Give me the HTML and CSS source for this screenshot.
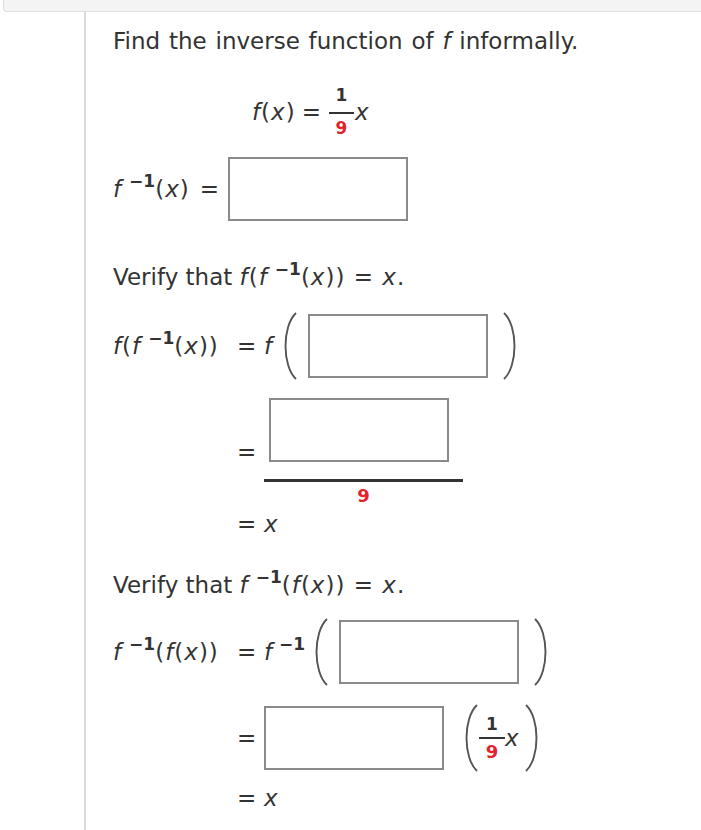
FILE: index.html
```html
<!DOCTYPE html>
<html>
<head>
<meta charset="utf-8">
<link rel="stylesheet" href="styles.css">
</head>
<body>
<div class="topbar"></div>
<div class="page">
  <p class="text intro">Find the inverse function of <i>f</i> informally.</p>

  <div class="given">
    <span class="m"><i>f</i>(<i>x</i>)</span>
    <span class="eq-inline">=</span>
    <span class="frac small">
      <span class="num">1</span>
      <span class="bar"></span>
      <span class="den red">9</span>
    </span><i class="m">x</i>
  </div>

  <div class="answer-row">
    <span class="m"><i>f</i><sup class="sup">−1</sup>(<i>x</i>)</span>
    <span class="eq-inline">=</span>
    <span class="box"></span>
  </div>

  <p class="text verify"><span class="words">Verify that</span> <span class="m"><i>f</i>(<i>f</i><sup class="sup">−1</sup>(<i>x</i>)) = <i>x</i>.</span></p>

  <div class="steps steps-one">
    <div class="step step-a">
      <span class="lbl m"><i>f</i>(<i>f</i><sup class="sup">−1</sup>(<i>x</i>))</span>
      <span class="eq">=</span>
      <span class="expr">
        <i class="m fn">f</i>
        <svg class="paren lp" width="16" height="68" viewBox="0 0 16 68"><path d="M15 1 C1 14 1 54 15 67"/></svg>
        <span class="box box-inner"></span>
        <svg class="paren rp" width="16" height="68" viewBox="0 0 16 68"><path d="M1 1 C15 14 15 54 1 67"/></svg>
      </span>
    </div>
    <div class="step step-b">
      <span class="lbl"></span>
      <span class="eq">=</span>
      <span class="expr">
        <span class="frac bigfrac">
          <span class="num"><span class="box box-num"></span></span>
          <span class="bar"></span>
          <span class="den red">9</span>
        </span>
      </span>
    </div>
    <div class="step step-c">
      <span class="lbl"></span>
      <span class="eq">=</span>
      <span class="expr"><i class="m">x</i></span>
    </div>
  </div>

  <p class="text verify verify-two"><span class="words">Verify that</span> <span class="m"><i>f</i><sup class="sup">−1</sup>(<i>f</i>(<i>x</i>)) = <i>x</i>.</span></p>

  <div class="steps steps-two">
    <div class="step step-a">
      <span class="lbl m"><i>f</i><sup class="sup">−1</sup>(<i>f</i>(<i>x</i>))</span>
      <span class="eq">=</span>
      <span class="expr">
        <span class="m fn2"><i>f</i><sup class="sup">−1</sup></span>
        <svg class="paren lp" width="16" height="68" viewBox="0 0 16 68"><path d="M15 1 C1 14 1 54 15 67"/></svg>
        <span class="box box-inner"></span>
        <svg class="paren rp" width="16" height="68" viewBox="0 0 16 68"><path d="M1 1 C15 14 15 54 1 67"/></svg>
      </span>
    </div>
    <div class="step step-b2">
      <span class="lbl"></span>
      <span class="eq">=</span>
      <span class="expr">
        <span class="box box-coef"></span>
        <svg class="paren" width="16" height="68" viewBox="0 0 16 68"><path d="M15 1 C1 14 1 54 15 67"/></svg>
        <span class="frac pfrac">
          <span class="num">1</span>
          <span class="bar"></span>
          <span class="den red">9</span>
        </span><i class="m px">x</i>
        <svg class="paren prp" width="16" height="68" viewBox="0 0 16 68"><path d="M1 1 C15 14 15 54 1 67"/></svg>
      </span>
    </div>
    <div class="step step-c step-c2">
      <span class="lbl"></span>
      <span class="eq">=</span>
      <span class="expr"><i class="m">x</i></span>
    </div>
  </div>
</div>
</body>
</html>
```

FILE: styles.css
```css
* { box-sizing: border-box; }

html, body {
  margin: 0;
  padding: 0;
  background: #ffffff;
}

body {
  font-family: "DejaVu Sans", Verdana, sans-serif;
  font-size: 23px;
  color: #333333;
}

.topbar {
  height: 12px;
  margin-left: 3px;
  background: #f4f4f4;
  border-left: 1px solid #dedede;
  border-bottom: 1px solid #dedede;
  border-bottom-left-radius: 4px;
}

.page {
  margin-left: 84px;
  border-left: 2px solid #dadada;
  min-height: 818px;
  padding: 16px 0 0 27px;
}

.text {
  margin: 0;
  line-height: 26px;
  white-space: nowrap;
}

.intro { word-spacing: 1.5px; }

i { font-style: italic; }

.m {
  white-space: nowrap;
  letter-spacing: 1px;
}

.sup {
  font-size: 17px;
  font-style: normal;
  font-weight: bold;
  vertical-align: 0;
  position: relative;
  top: -10px;
  margin-left: 7px;
  line-height: 0;
  letter-spacing: 0;
}

.red { color: #e4222c; }

.given {
  display: flex;
  align-items: center;
  margin: 32px 0 0 139px;
  height: 52px;
}

.given .eq-inline {
  margin: 0 7px 0 6px;
}

.frac {
  display: inline-flex;
  flex-direction: column;
  align-items: center;
  font-weight: bold;
}

.frac .bar {
  align-self: stretch;
  height: 2px;
  background: #333333;
}

.frac.small {
  font-size: 17px;
  line-height: 17px;
  margin: 0 1px;
}

.frac.small .bar { width: 25px; margin: 8px 0 6px; }

.answer-row {
  display: flex;
  align-items: center;
  margin-top: 19px;
}

.answer-row .eq-inline { margin: 0 9px 0 10px; }

.box {
  display: inline-block;
  flex: none;
  width: 180px;
  height: 64px;
  border: 2px solid #8a8a8a;
  background: #ffffff;
}

.verify { margin-top: 43px; }
.verify-two { margin-top: 37px; }

.steps {
  display: flex;
  flex-direction: column;
}

.step {
  display: flex;
  align-items: center;
}

.lbl {
  width: 124px;
  flex: none;
}

.eq {
  width: 27px;
  flex: none;
}

.expr {
  display: flex;
  align-items: center;
}

.paren { flex: none; }
.paren path {
  fill: none;
  stroke: #555555;
  stroke-width: 1.9;
}

.steps-one { margin-top: 22px; }

.fn { margin-right: 8px; }
.fn2 { margin-right: 7px; letter-spacing: 0; }

.box-inner { margin: 0 15px 0 11px; }

.step-b { margin-top: 18px; }

.bigfrac { font-size: 18px; line-height: 20px; }
.bigfrac .num { padding: 0 14px 0 5px; }
.bigfrac .box-num { display: block; }
.bigfrac .bar { height: 3px; margin: 17px 0 4px; }

.step-c { margin-top: 7px; height: 22px; }
.step-c2 { margin-top: 15px; }

.steps-two { margin-top: 20px; }

.box-coef { margin-right: 18px; }

.step-b2 { margin-top: 18px; }

.pfrac { font-size: 17px; line-height: 17px; margin-left: 1px; }
.pfrac .den { font-size: 18px; line-height: 18px; }
.pfrac .bar { width: 26px; margin: 4px 0 4px; }
.px { margin-right: 3px; }
.prp { margin-left: 2px; }
```
